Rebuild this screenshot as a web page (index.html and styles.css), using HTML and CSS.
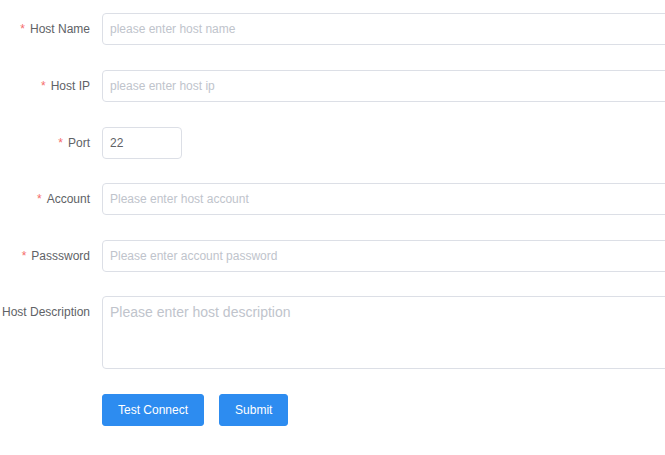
FILE: index.html
```html
<!DOCTYPE html>
<html lang="en">
<head>
<meta charset="utf-8">
<title>Host Form</title>
<link rel="stylesheet" href="styles.css">
</head>
<body>
<form class="form">
  <div class="row">
    <label class="label"><span class="req">*</span>Host Name</label>
    <div class="field"><input class="input" type="text" placeholder="please enter host name"></div>
  </div>
  <div class="row">
    <label class="label"><span class="req">*</span>Host IP</label>
    <div class="field"><input class="input" type="text" placeholder="please enter host ip"></div>
  </div>
  <div class="row">
    <label class="label"><span class="req">*</span>Port</label>
    <div class="field"><input class="input input-port" type="text" value="22"></div>
  </div>
  <div class="row">
    <label class="label"><span class="req">*</span>Account</label>
    <div class="field"><input class="input" type="text" placeholder="Please enter host account"></div>
  </div>
  <div class="row">
    <label class="label"><span class="req">*</span>Passsword</label>
    <div class="field"><input class="input" type="password" placeholder="Please enter account password"></div>
  </div>
  <div class="row">
    <label class="label">Host Description</label>
    <div class="field"><textarea class="textarea" placeholder="Please enter host description"></textarea></div>
  </div>
  <div class="row">
    <div class="label"></div>
    <div class="field actions">
      <button class="btn" type="button">Test Connect</button>
      <button class="btn" type="button">Submit</button>
    </div>
  </div>
</form>
</body>
</html>
```
FILE: styles.css
```css
html, body {
  margin: 0;
  padding: 0;
  overflow: hidden;
  background: #ffffff;
  font-family: "Liberation Sans", Arial, sans-serif;
}

.form {
  padding-top: 13.4px;
}

.row {
  display: flex;
  align-items: flex-start;
  margin-bottom: 24.6px;
}

.label {
  flex: 0 0 102px;
  box-sizing: border-box;
  padding-right: 12px;
  text-align: right;
  font-size: 12px;
  line-height: 32px;
  color: #606266;
  white-space: nowrap;
}

.req {
  color: #f56c6c;
  margin-right: 5px;
}

.field {
  flex: 1;
  min-width: 0;
  overflow: hidden;
}

.input,
.textarea {
  display: block;
  box-sizing: border-box;
  width: 600px;
  border: 1px solid #dcdfe6;
  border-radius: 4px;
  background: #fff;
  color: #606266;
  font-family: "Liberation Sans", Arial, sans-serif;
  outline: none;
  margin: 0;
}

.input {
  height: 32px;
  padding: 0 7px;
  font-size: 12px;
}

.input-port {
  width: 80px;
}

.textarea {
  height: 72.6px;
  padding: 5px 7px;
  font-size: 14px;
  line-height: 1.5;
  resize: none;
}

.input::placeholder,
.textarea::placeholder {
  color: #c0c4cc;
}

.actions {
  display: flex;
  gap: 15px;
}

.btn {
  height: 32px;
  padding: 0 15px;
  border: 1px solid #2d8cf0;
  border-radius: 3px;
  background: #2d8cf0;
  color: #fff;
  font-family: "Liberation Sans", Arial, sans-serif;
  font-size: 12px;
  cursor: pointer;
}
```
